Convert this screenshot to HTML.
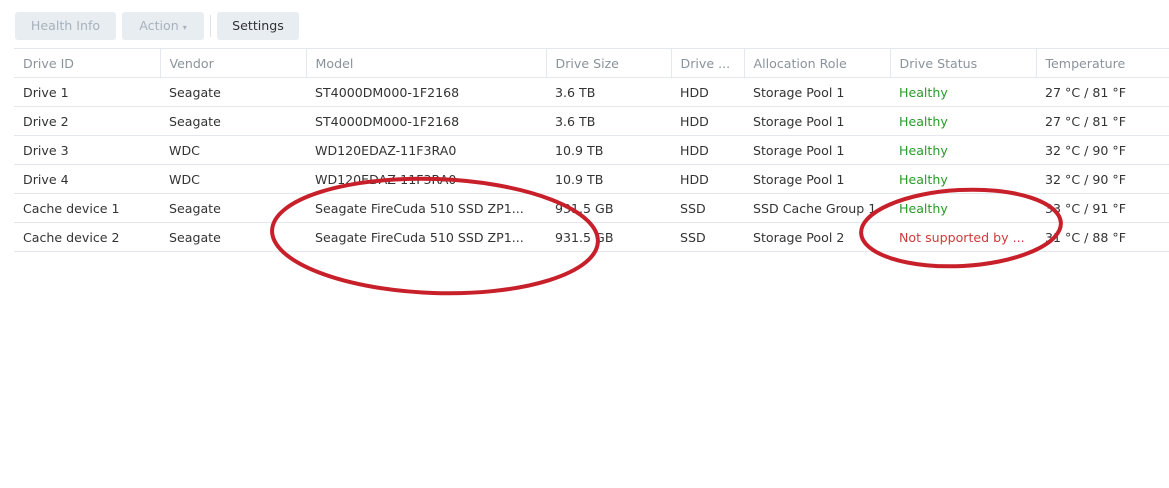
<!DOCTYPE html>
<html><head><style>
body{margin:0;width:1169px;height:488px;background:#fff;font-family:"DejaVu Sans",Verdana,sans-serif;font-size:12.6px;color:#333;position:relative;overflow:hidden}
.btn{position:absolute;top:12px;height:28px;border-radius:3px;background:#e8edf2;line-height:28px;text-align:center;font-size:12.6px}
table{position:absolute;left:14px;top:48px;border-collapse:collapse;width:1155px;table-layout:fixed}
td,th{height:28px;padding:0 0 0 9px;text-align:left;font-weight:normal;border-bottom:1px solid #e4e8ec;white-space:nowrap;overflow:hidden}
th{color:#8a939c;border-top:1px solid #e4e8ec;border-left:1px solid #e4e8ec}
th:first-child{border-left:none}
.g{color:#2a9a2a}.r{color:#d03a3a}
</style></head><body>
<div class="btn" style="left:15px;width:101px;color:#a8b1ba">Health Info</div>
<div class="btn" style="left:122px;width:82px;color:#a8b1ba">Action <span style="font-size:8px">▾</span></div>
<div style="position:absolute;left:210px;top:15px;width:1px;height:22px;background:#dde2e7"></div>
<div class="btn" style="left:217px;width:82px;color:#333">Settings</div>
<table>
<colgroup><col style="width:146px"><col style="width:146px"><col style="width:240px"><col style="width:125px"><col style="width:73px"><col style="width:146px"><col style="width:146px"><col></colgroup>
<tr><th>Drive ID</th><th>Vendor</th><th>Model</th><th>Drive Size</th><th>Drive ...</th><th>Allocation Role</th><th>Drive Status</th><th>Temperature</th></tr>
<tr><td>Drive 1</td><td>Seagate</td><td>ST4000DM000-1F2168</td><td>3.6 TB</td><td>HDD</td><td>Storage Pool 1</td><td class="g">Healthy</td><td>27 °C / 81 °F</td></tr>
<tr><td>Drive 2</td><td>Seagate</td><td>ST4000DM000-1F2168</td><td>3.6 TB</td><td>HDD</td><td>Storage Pool 1</td><td class="g">Healthy</td><td>27 °C / 81 °F</td></tr>
<tr><td>Drive 3</td><td>WDC</td><td>WD120EDAZ-11F3RA0</td><td>10.9 TB</td><td>HDD</td><td>Storage Pool 1</td><td class="g">Healthy</td><td>32 °C / 90 °F</td></tr>
<tr><td>Drive 4</td><td>WDC</td><td>WD120EDAZ-11F3RA0</td><td>10.9 TB</td><td>HDD</td><td>Storage Pool 1</td><td class="g">Healthy</td><td>32 °C / 90 °F</td></tr>
<tr><td>Cache device 1</td><td>Seagate</td><td>Seagate FireCuda 510 SSD ZP1...</td><td>931.5 GB</td><td>SSD</td><td>SSD Cache Group 1</td><td class="g">Healthy</td><td>33 °C / 91 °F</td></tr>
<tr><td>Cache device 2</td><td>Seagate</td><td>Seagate FireCuda 510 SSD ZP1...</td><td>931.5 GB</td><td>SSD</td><td>Storage Pool 2</td><td class="r">Not supported by ...</td><td>31 °C / 88 °F</td></tr>
</table>
<svg width="1169" height="488" style="position:absolute;left:0;top:0">
<ellipse cx="435" cy="236" rx="163" ry="57" transform="rotate(2 435 236)" fill="none" stroke="#c8202a" stroke-width="4"/>
<ellipse cx="961" cy="228" rx="100" ry="38" transform="rotate(-3 961 228)" fill="none" stroke="#c8202a" stroke-width="4"/>
</svg>
</body></html>
